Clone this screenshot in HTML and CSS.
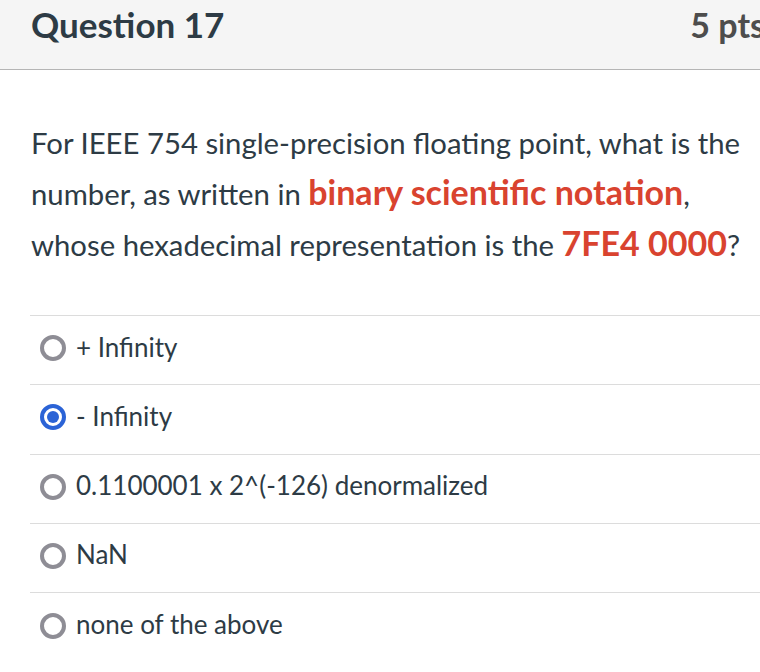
FILE: index.html
```html
<!DOCTYPE html>
<html>
<head>
<meta charset="utf-8">
<link rel="stylesheet" href="styles.css">
</head>
<body>
<div class="question">
  <div class="header">
    <h2 class="title">Question 17</h2>
    <span class="pts">5 pts</span>
  </div>
  <div class="content">
    <p class="text">For IEEE 754 single-precision floating point, what is the number, as written in <strong class="red">binary scientific notation</strong>, whose hexadecimal representation is the <strong class="red">7FE4 0000</strong>?</p>
    <div class="answers">
      <label class="answer"><span class="radio"></span><span class="label">+ Infinity</span></label>
      <label class="answer"><span class="radio checked"></span><span class="label">- Infinity</span></label>
      <label class="answer"><span class="radio"></span><span class="label">0.1100001 x 2^(-126) denormalized</span></label>
      <label class="answer"><span class="radio"></span><span class="label">NaN</span></label>
      <label class="answer"><span class="radio"></span><span class="label">none of the above</span></label>
    </div>
  </div>
</div>
</body>
</html>
```
FILE: styles.css
```css
html, body {
  margin: 0;
  padding: 0;
  background: #fff;
  overflow: hidden;
}
body {
  font-family: Lato, "Noto Sans", sans-serif;
  color: #2d3b45;
}
.question {
  width: 770px;
}
.header {
  height: 69px;
  background: #f5f5f5;
  border-bottom: 1px solid #b5b5b5;
  display: flex;
  align-items: center;
  justify-content: space-between;
  padding: 0 0 0 31px;
  box-sizing: content-box;
}
.title {
  margin: 0;
  font-size: 35px;
  font-weight: 700;
  line-height: 1;
  margin-top: -20px;
}
.pts {
  font-size: 34px;
  font-weight: 700;
  color: #4d4d4d;
  line-height: 1;
  margin-right: 5px;
  margin-top: -20px;
}
.content {
  padding: 0 0 0 30px;
}
.text {
  margin: 0;
  padding: 47px 10px 0 1px;
  font-size: 29.3px;
  line-height: 51px;
  width: 729px;
}
.red {
  color: #d9432f;
  font-weight: 700;
  font-size: 34px;
  line-height: 1;
}
.answers {
  margin-top: 45px;
  border-top: 1px solid #dcdcdc;
}
.answer {
  display: flex;
  align-items: center;
  box-sizing: border-box;
  height: 69.25px;
  padding: 0 0 4px 10px;
  border-bottom: 1px solid #dcdcdc;
  gap: 10px;
}
.answer:last-child {
  border-bottom: none;
}
.radio {
  width: 18px;
  height: 18px;
  border: 4px solid #8e8d95;
  border-radius: 50%;
  box-sizing: content-box;
  flex: none;
}
.radio.checked {
  border-color: #2b63d6;
  position: relative;
}
.radio.checked::after {
  content: "";
  position: absolute;
  left: 3px;
  top: 3px;
  width: 12px;
  height: 12px;
  border-radius: 50%;
  background: #2b63d6;
}
.label {
  font-size: 26px;
  margin-bottom: 3px;
}
```
